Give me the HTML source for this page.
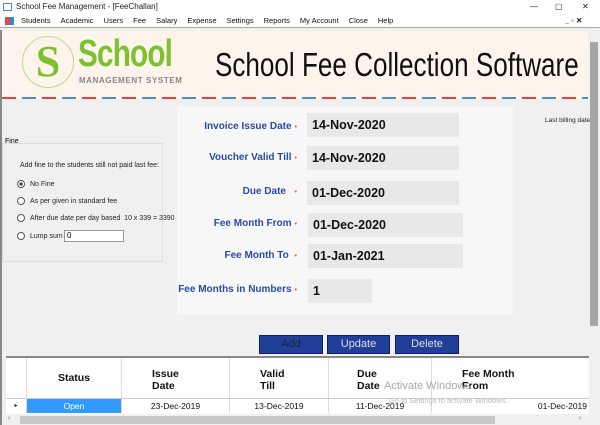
<!DOCTYPE html>
<html><head><style>
*{margin:0;padding:0;box-sizing:border-box}
body{width:600px;height:425px;overflow:hidden;background:#f0f0f0;font-family:"Liberation Sans",sans-serif;position:relative}
.a{position:absolute}
.menu span{margin-right:10px}
.lbl{position:absolute;color:#2a4aa8;font-weight:bold;font-size:10px;text-align:right}
.lbl i{color:#e55;font-style:normal;font-size:7px;margin-left:3px}
.inp{position:absolute;background:#e8e8e8;font-weight:bold;font-size:12.5px;color:#111;padding-left:5px;line-height:24px}
.btn{position:absolute;top:335px;height:19px;background:#1f3f98;border:1px solid #0c1f5c;color:#dde;font-size:11px;text-align:center;line-height:17px}
.rad{position:absolute;left:17px;font-size:7px;color:#222}
.rad b{display:inline-block;width:8px;height:8px;border:1px solid #555;border-radius:50%;vertical-align:-2px;margin-right:5px;background:#fff}
.th{position:absolute;top:0;height:40px;font-size:10.5px;font-weight:bold;color:#111;border-right:1px solid #ddd;line-height:12px}
.td{position:absolute;top:41px;height:14px;font-size:8.5px;color:#111;text-align:center;line-height:14px;border-right:1px solid #ddd}
</style></head><body>
<div class="a" style="left:0;top:0;width:600px;height:14px;background:#fff;font-size:8px;line-height:14px;padding-left:16px;color:#222">School Fee Management - [FeeChallan]
<span class="a" style="left:3px;top:3px;width:9px;height:8px;border:1px solid #4a8ad0"></span>
<span class="a" style="left:530px;top:0">—</span><span class="a" style="left:555px">▢</span><span class="a" style="left:582px">✕</span></div>
<div class="a menu" style="left:0;top:14px;width:600px;height:14px;background:#fff;font-size:7.5px;line-height:14px;padding-left:21px;color:#111;border-bottom:1px solid #aaa">
<span class="a" style="left:5px;top:3px;width:9px;height:8px;background:linear-gradient(90deg,#e44 50%,#38c 50%)"></span>
<span>Students</span><span>Academic</span><span>Users</span><span>Fee</span><span>Salary</span><span>Expense</span><span>Settings</span><span>Reports</span><span>My Account</span><span>Close</span><span>Help</span>
<span class="a" style="left:565px;top:0;font-weight:bold">_ ▫ ✕</span></div>
<div class="a" style="left:0;top:30px;width:2px;height:395px;background:#888"></div>
<div class="a" style="left:2px;top:31px;width:586px;height:68px;background:#fdf4ec"></div>
<div class="a" style="left:2px;top:97px;width:586px;height:2px;background:repeating-linear-gradient(90deg,#d44 0 14px,transparent 14px 20px,#58c 20px 34px,transparent 34px 40px)"></div>
<div class="a" style="left:22px;top:36px;width:52px;height:52px;border:1px solid #b5dc90;border-radius:50%;color:#7cc230;font:bold 44px 'Liberation Serif',serif;text-align:center;line-height:50px">S</div>
<div class="a" style="left:78px;top:33px;color:#7cc230;font-weight:bold;font-size:38px;letter-spacing:-1px;transform:scaleX(0.78);transform-origin:left;white-space:nowrap">School</div>
<div class="a" style="left:79px;top:76px;color:#888;font-weight:bold;font-size:8px;letter-spacing:0.6px;white-space:nowrap">MANAGEMENT SYSTEM</div>
<div class="a" style="left:215px;top:46px;font-size:33px;color:#111;transform:scaleX(0.79);transform-origin:left;white-space:nowrap">School Fee Collection Software</div>
<div class="a" style="left:589px;top:31px;width:10px;height:394px;background:#f0f0f0"></div>
<div class="a" style="left:590px;top:42px;width:8px;height:284px;background:#a6a6a6"></div>
<div class="a" style="left:5px;top:138px;font-size:7px">Fine</div>
<div class="a" style="left:2px;top:143px;width:161px;height:119px;border:1px solid #ddd"></div>
<div class="a" style="left:20px;top:162px;font-size:7px;color:#222">Add fine to the students still not paid last fee:</div>
<div class="rad" style="top:180px"><b style="background:radial-gradient(#333 35%,#fff 40%)"></b>No Fine</div>
<div class="rad" style="top:197px"><b></b>As per given in standard fee</div>
<div class="rad" style="top:214px"><b></b>After due date per day based &nbsp;10 x 339 = 3390</div>
<div class="rad" style="top:232px"><b></b>Lump sum</div>
<div class="a" style="left:64px;top:230px;width:60px;height:12px;background:#fff;border:1px solid #999;font-size:8px;padding-left:2px">0</div>
<div class="a" style="left:177px;top:106px;width:336px;height:208px;background:#f7f7f7"></div>
<div class="lbl" style="right:303px;top:121px">Invoice Issue Date<i>•</i></div>
<div class="inp" style="left:307px;top:113px;width:152px;height:24px">14-Nov-2020</div>
<div class="lbl" style="right:303px;top:152px">Voucher Valid Till<i>•</i></div>
<div class="inp" style="left:307px;top:146px;width:152px;height:24px">14-Nov-2020</div>
<div class="lbl" style="right:303px;top:186px">Due Date &nbsp;<i>•</i></div>
<div class="inp" style="left:307px;top:181px;width:152px;height:24px">01-Dec-2020</div>
<div class="lbl" style="right:303px;top:218px">Fee Month From<i>•</i></div>
<div class="inp" style="left:308px;top:213px;width:155px;height:24px">01-Dec-2020</div>
<div class="lbl" style="right:303px;top:250px">Fee Month To <i>•</i></div>
<div class="inp" style="left:308px;top:244px;width:155px;height:24px">01-Jan-2021</div>
<div class="lbl" style="right:303px;top:284px">Fee Months in Numbers<i>•</i></div>
<div class="inp" style="left:308px;top:279px;width:64px;height:24px">1</div>
<div class="a" style="left:545px;top:117px;font-size:6.5px;color:#222">Last billing date</div>
<div class="btn" style="left:259px;width:64px;color:#223">Add</div>
<div class="btn" style="left:327px;width:63px">Update</div>
<div class="btn" style="left:395px;width:64px">Delete</div>
<div class="a" style="left:6px;top:356px;width:583px;height:58px;background:#fff;border-top:2px solid #888;overflow:hidden">
<div class="th" style="left:0;width:21px"></div>
<div class="th" style="left:21px;width:95px;text-align:center;line-height:40px">Status</div>
<div class="th" style="left:116px;width:108px;padding:10px 0 0 30px">Issue<br>Date</div>
<div class="th" style="left:224px;width:99px;padding:10px 0 0 30px">Valid<br>Till</div>
<div class="th" style="left:323px;width:103px;padding:10px 0 0 28px">Due<br>Date</div>
<div class="th" style="left:426px;width:160px;padding:10px 0 0 30px;border:none">Fee Month<br>From</div>
<div class="a" style="left:0;top:40px;width:583px;height:1px;background:#ccc"></div>
<div class="td" style="left:0;width:21px;font-size:6px">▸</div>
<div class="td" style="left:21px;width:95px;background:#3399ff;color:#fff">Open</div>
<div class="td" style="left:116px;width:108px">23-Dec-2019</div>
<div class="td" style="left:224px;width:99px">13-Dec-2019</div>
<div class="td" style="left:323px;width:103px">11-Dec-2019</div>
<div class="td" style="left:426px;width:160px;text-align:right;padding-right:4px">01-Dec-2019</div>
<div class="a" style="left:378px;top:22px;font-size:11px;color:#aaa">Activate Windows</div>
<div class="a" style="left:383px;top:38px;font-size:7.5px;color:#bbb">Go to Settings to activate Windows.</div>
</div>
<div class="a" style="left:6px;top:414px;width:583px;height:11px;background:#f0f0f0;font-size:7px;color:#666">
<span class="a" style="left:2px;top:1px">‹</span>
<div class="a" style="left:14px;top:2px;width:475px;height:8px;background:#c8c8c8"></div>
<span class="a" style="left:573px;top:1px">›</span></div>
</body></html>
